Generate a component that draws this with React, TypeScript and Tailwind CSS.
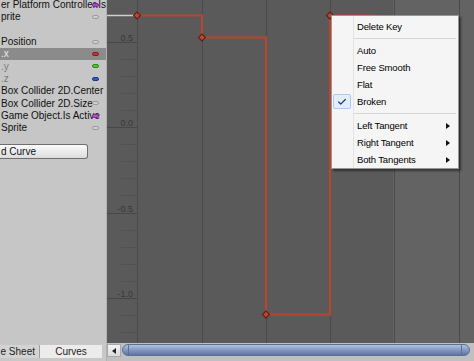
import { Check } from 'lucide-react'

type Row = {
  label: string
  dot: string | null
  text?: string
  selected?: boolean
}

// visible part of the property list (the panel is scrolled sideways)
const rows: Row[] = [
  { label: 'er Platform Controller.Is', dot: 'bg-[#a64ad4] border-[#7a2aa8]' },
  { label: 'prite', dot: 'bg-[#cfcfcf] border-[#9c9c9c]' },
  { label: '', dot: null },
  { label: 'Position', dot: 'bg-[#cfcfcf] border-[#9c9c9c]' },
  { label: '.x', dot: 'bg-[#c8342c] border-[#8a1c16]', text: 'text-[#ececec]', selected: true },
  { label: '.y', dot: 'bg-[#54c52c] border-[#2f8a14]', text: 'text-[#7c7c7c]' },
  { label: '.z', dot: 'bg-[#2f5ad0] border-[#1a3690]', text: 'text-[#7c7c7c]' },
  { label: 'Box Collider 2D.Center', dot: null },
  { label: 'Box Collider 2D.Size', dot: 'bg-[#cfcfcf] border-[#9c9c9c]' },
  { label: 'Game Object.Is Active', dot: 'bg-[#c24ccf] border-[#8a2a96]' },
  { label: 'Sprite', dot: 'bg-[#cfcfcf] border-[#9c9c9c]' },
]

type MenuItem = { kind: 'item'; label: string; checked?: boolean; sub?: boolean } | { kind: 'sep' }

const menu: MenuItem[] = [
  { kind: 'item', label: 'Delete Key' },
  { kind: 'sep' },
  { kind: 'item', label: 'Auto' },
  { kind: 'item', label: 'Free Smooth' },
  { kind: 'item', label: 'Flat' },
  { kind: 'item', label: 'Broken', checked: true },
  { kind: 'sep' },
  { kind: 'item', label: 'Left Tangent', sub: true },
  { kind: 'item', label: 'Right Tangent', sub: true },
  { kind: 'item', label: 'Both Tangents', sub: true },
]

const gridX = [30, 95, 159, 223, 287, 352]
const majors = [
  { y: 42, label: '0.5' },
  { y: 127, label: '0.0' },
  { y: 213, label: '-0.5' },
  { y: 298, label: '-1.0' },
]
const keys = [
  [30, 15],
  [95, 37],
  [159, 314],
  [223, 15],
]

function PropertyList() {
  return (
    <div className="w-[107px] shrink-0 bg-[#c6c6c6] border-r border-[#b2b2b2] overflow-hidden">
      <div className="-mt-[1px]">
        {rows.map((r, i) => (
          <div
            key={i}
            className={`relative h-[12.3px] flex items-center pl-[1px] whitespace-nowrap ${r.selected ? 'bg-[#8b8b8b]' : ''}`}
          >
            <span className={`leading-none ${r.text ?? 'text-[#111]'}`}>{r.label}</span>
            {r.dot && (
              <span className={`absolute left-[92px] top-[4px] w-[7px] h-[4px] rounded-full border ${r.dot}`} />
            )}
          </div>
        ))}
      </div>
      <div className="mt-[10px] w-[88px] h-[15px] flex items-center pl-[1px] border border-l-0 border-[#6f6f6f] rounded-r-[3px] bg-gradient-to-b from-[#fbfbfb] to-[#dcdcdc] text-[#111]">
        d Curve
      </div>
    </div>
  )
}

function CurveView() {
  return (
    <div className="relative flex-1 h-[343px] bg-[#5a5a5a] overflow-hidden">
      <svg width="367" height="343" className="block">
        <rect x="286" y="0" width="81" height="343" fill="#636363" />
        {gridX.map(x => (
          <line key={x} x1={x + 0.5} y1="0" x2={x + 0.5} y2="343" stroke="#4a4a4a" strokeWidth="1" />
        ))}
        {majors.map(m => (
          <g key={m.label}>
            <line x1="0" y1={m.y + 0.5} x2="30" y2={m.y + 0.5} stroke="#474747" />
            {[1, 2, 3, 4].map(k => (
              <line key={k} x1="14" y1={m.y + 0.5 + k * 17} x2="30" y2={m.y + 0.5 + k * 17} stroke="#525252" />
            ))}
            <text x="26" y={m.y - 1} textAnchor="end" fontSize="9" fontFamily="'Liberation Sans', Arial, sans-serif" fill="#383838">
              {m.label}
            </text>
          </g>
        ))}
        <path d="M0 15.5 H30" stroke="#cfcfcf" strokeWidth="1.5" fill="none" />
        <path d="M30 15.5 H95 V37.5 H159 V314.5 H223 V15.5 H270" stroke="#b9452f" strokeWidth="2" fill="none" />
        {keys.map(([x, y]) => (
          <rect
            key={`${x}-${y}`}
            x={x - 2.5}
            y={y - 2}
            width="5"
            height="5"
            transform={`rotate(45 ${x} ${y + 0.5})`}
            fill="#c0442e"
            stroke="#5a1a10"
            strokeWidth="1"
          />
        ))}
      </svg>

      {/* right click key menu */}
      <div className="absolute left-[224px] top-[15px] w-[128px] bg-[#f5f5f5] border border-[#979797] pt-[2px] shadow-[2px_2px_2px_rgba(0,0,0,0.45)] text-[9.5px] tracking-[-0.15px] text-black">
        <div className="absolute left-[21px] top-0 bottom-0 w-px bg-[#e2e3e3]" />
        {menu.map((m, i) =>
          m.kind === 'sep' ? (
            <div key={i} className="h-[7px] flex items-center pl-[22px] pr-[2px]">
              <div className="flex-1 h-px bg-[#d7d7d7]" />
            </div>
          ) : (
            <div key={i} className="relative h-[17px] flex items-center pl-[25px] pr-[8px]">
              {m.checked && (
                <span className="absolute left-[1px] top-[1px] w-[18px] h-[15px] rounded-[2px] border border-[#a9cbef] bg-[#e4eefb] flex items-center justify-center">
                  <Check size={10} strokeWidth={3} color="#1d3a8f" />
                </span>
              )}
              <span className="flex-1 leading-none">{m.label}</span>
              {m.sub && (
                <svg width="4" height="6" viewBox="0 0 4 6">
                  <path d="M0 0 L4 3 L0 6 Z" fill="#111" />
                </svg>
              )}
            </div>
          ),
        )}
      </div>
    </div>
  )
}

function BottomBar() {
  return (
    <div className="h-[18px] flex bg-[#c8c8c8]">
      <div className="w-[107px] shrink-0 flex pt-[2px] border-r border-[#b2b2b2]">
        <div className="w-[40px] h-[13px] flex items-center justify-end pr-[4px] bg-[#d3d3d3] border-r border-[#9f9f9f] text-[#222]">
          e Sheet
        </div>
        <div className="w-[62px] h-[13px] flex items-center justify-center bg-[#ececec] text-[#222]">Curves</div>
      </div>
      <div className="flex-1 flex items-start pt-[1px] bg-[#c0c0c0]">
        <div className="w-[14px] h-[13px] flex items-center justify-center bg-gradient-to-b from-[#f4f4f4] to-[#dadada] border border-[#a8a8a8]">
          <svg width="4" height="6" viewBox="0 0 4 6">
            <path d="M4 0 L0 3 L4 6 Z" fill="#222" />
          </svg>
        </div>
        <div className="relative flex-1 h-[12px] ml-[1px] mr-[4px] rounded-full border border-[#5b6f9a] bg-gradient-to-b from-[#b4c3de] via-[#8299c3] to-[#5f75a3]">
          <div className="absolute left-[5px] top-0 bottom-0 w-px bg-[#5b6f9a]" />
          <div className="absolute right-[7px] top-0 bottom-0 w-px bg-[#5b6f9a]" />
        </div>
      </div>
    </div>
  )
}

export default function App() {
  return (
    <div className="w-[474px] h-[361px] overflow-hidden flex flex-col bg-[#c6c6c6] text-[10px] font-['Liberation_Sans',Arial,sans-serif]">
      <div className="flex h-[343px]">
        <PropertyList />
        <CurveView />
      </div>
      <BottomBar />
    </div>
  )
}
